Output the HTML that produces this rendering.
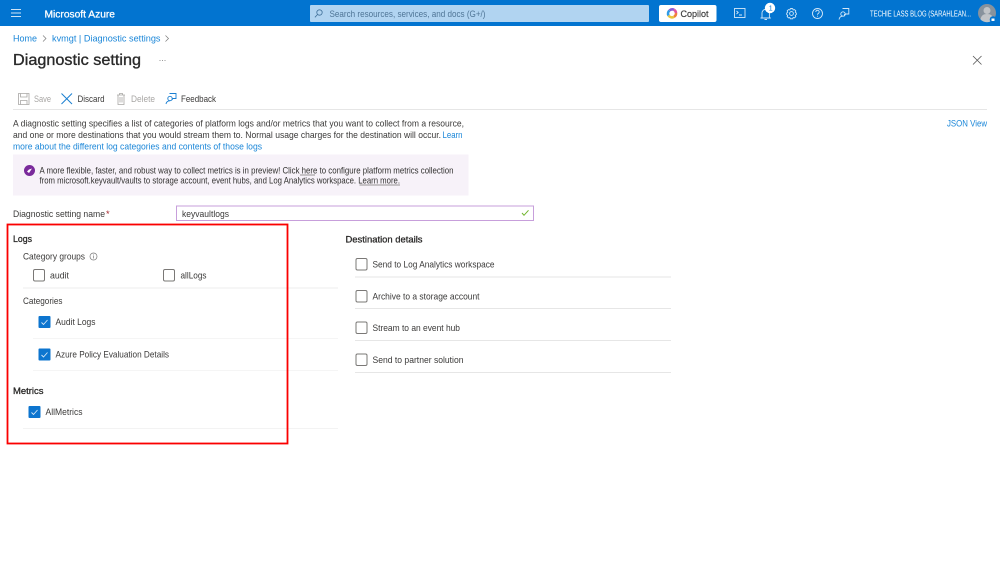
<!DOCTYPE html>
<html lang="en"><head><meta charset="utf-8"><title>Diagnostic setting</title>
<style>
html,body{margin:0;padding:0;background:#fff;width:1000px;height:563px;overflow:hidden}
svg{display:block;filter:blur(.35px)}
text{font-family:"Liberation Sans",sans-serif;font-size:9.3px;fill:#3b3a39}
.b{fill:#292827;stroke:#292827;stroke-width:.28}
.l{fill:#1a86d8}
.d{fill:#a8a6a4}
.n{fill:none}
</style></head><body>
<svg width="1000" height="563" viewBox="0 0 1000 563" xmlns="http://www.w3.org/2000/svg">
<rect width="1000" height="26" fill="#0274d0"/>
<g stroke="#cfe4f6" stroke-width="1"><path d="M11 9.500h10M11 13h10M11 16.500h10"/></g>
<text x="44.500" y="17.500" textLength="70.500" lengthAdjust="spacingAndGlyphs" style="font-size:10.200px;fill:#fff;stroke:#fff;stroke-width:.25">Microsoft Azure</text>
<rect x="310" y="5" width="339" height="17" rx="1" fill="#b1d4f1"/>
<circle cx="319.500" cy="12.500" r="2.700" class="n" stroke="#41719a" stroke-width=".8"/><path d="M317.500 14.500l-2.600 2.800" stroke="#41719a" stroke-width=".8"/>
<text x="329.500" y="17" textLength="156" lengthAdjust="spacingAndGlyphs" style="fill:#4f7596">Search resources, services, and docs (G+/)</text>
<rect x="659" y="5" width="57.500" height="17" rx="2" fill="#fff"/>
<g fill="none" stroke-width="2.600">
<path d="M668.500 15.500a4 4 0 0 1 1-5" stroke="#2f9be6"/>
<path d="M669.500 10.500a4 4 0 0 1 4.500-.8" stroke="#8a5ad6"/>
<path d="M674 9.700a4 4 0 0 1 2 3.300" stroke="#e2569c"/>
<path d="M676 13a4 4 0 0 1-2 3.800" stroke="#f0803c"/>
<path d="M674 16.800a4 4 0 0 1-5.500-1.300" stroke="#e8c53c"/>
</g>
<text x="680.500" y="17" textLength="28" lengthAdjust="spacingAndGlyphs" style="fill:#404040;stroke:#404040;stroke-width:.2">Copilot</text>
<g class="n" stroke="#d5e8f8" stroke-width=".9" fill="none">
<rect x="734.500" y="8.500" width="10.500" height="9"/><path d="M736.500 11l1.700 1.500-1.700 1.500M739 15h3"/>
<path d="M762 18v-5a3.700 3.700 0 0 1 7.400 0v5M760.500 18h10.300M764.500 19.500h2.500"/>
<circle cx="791.500" cy="13.500" r="1.900"/>
<path d="M791.500 8.500l1.200.2.500 1.300 1.300-.4 1.300 1.300-.5 1.300 1 .9v1.400l-1 .8.500 1.300-1.300 1.300-1.300-.4-.5 1.300h-2.400l-.5-1.300-1.300.4-1.300-1.300.5-1.300-1-.8v-1.400l1-.9-.5-1.300 1.300-1.300 1.300.4.500-1.300z"/>
<circle cx="817.500" cy="13.500" r="5"/><path d="M815.800 12a1.700 1.700 0 1 1 2.600 1.400c-.6.400-.9.700-.9 1.400M817.500 15.800v.8"/>
<circle cx="843" cy="14" r="2.200"/><path d="M839 19.500c.4-2.200 1.800-3.400 4-3.400M842.500 8.500h6.300v5.500h-3l-1.300 1.500v-1.500"/>
</g>
<circle cx="770" cy="8" r="5.200" fill="#fff"/><text x="768.700" y="10.500" style="font-size:7px;fill:#0274d0">1</text>
<text x="870" y="16.500" textLength="101" lengthAdjust="spacingAndGlyphs" style="font-size:7.800px;fill:#fff">TECHIE LASS BLOG (SARAHLEAN...</text>
<circle cx="987" cy="13" r="9" fill="#87929d"/><circle cx="987" cy="10.500" r="3.500" fill="#c0c4c8"/><path d="M980.500 19.500c.5-4 3-5.500 6.500-5.500s6 1.500 6.500 5.500a9 9 0 0 1-13 0z" fill="#c0c4c8"/>
<circle cx="993" cy="19.500" r="3.300" fill="#0274d0"/><rect x="991.500" y="18.500" width="3" height="2.500" fill="#fff"/>

<text x="13" y="41.500" textLength="24" lengthAdjust="spacingAndGlyphs" class="l">Home</text>
<path d="M43 35.500l3 3-3 3M165.500 35.500l3 3-3 3" class="n" stroke="#777" stroke-width=".7"/>
<text x="52" y="41.500" textLength="108.500" lengthAdjust="spacingAndGlyphs" class="l">kvmgt | Diagnostic settings</text>
<text x="13" y="65" textLength="128" lengthAdjust="spacingAndGlyphs" style="font-size:15.800px;fill:#2a2a2a;stroke:#2a2a2a;stroke-width:.35">Diagnostic setting</text>
<g fill="#777"><circle cx="160" cy="60.500" r=".5"/><circle cx="162.500" cy="60.500" r=".5"/><circle cx="165" cy="60.500" r=".5"/></g>
<path d="M973 56l8.500 8.500M981.500 56l-8.500 8.500" stroke="#555" stroke-width=".8"/>

<g class="n" fill="none" stroke="#a8a6a4" stroke-width=".8"><path d="M18.500 93.500h10.500v11h-10.500zM20.500 93.500v3.500h6.500v-3.500M20.500 104.500v-4h6.500v4"/>
<path d="M117 95h8M118 95v9.500h6V95M119.500 95v-1.500h3V95M120 97v5.500M122 97v5.500"/></g>
<path d="M61.500 93.500l10.500 10.500M72 93.500l-10.500 10.500" stroke="#1a7fd1" stroke-width="1"/>
<g fill="none" stroke="#1a7fd1" stroke-width=".9"><circle cx="170" cy="98.500" r="2.200"/><path d="M166 104c.4-2.200 1.800-3.200 4-3.200M169.500 93.500h6.500v5h-3l-1.300 1.500"/></g>
<text x="34" y="102" textLength="17" lengthAdjust="spacingAndGlyphs" class="d">Save</text>
<text x="77.500" y="102" textLength="27" lengthAdjust="spacingAndGlyphs">Discard</text>
<text x="131" y="102" textLength="24" lengthAdjust="spacingAndGlyphs" class="d">Delete</text>
<text x="181" y="102" textLength="35" lengthAdjust="spacingAndGlyphs">Feedback</text>
<rect x="13" y="109" width="974" height="1" fill="#e6e6e6"/>

<text x="13" y="126.500" textLength="451" lengthAdjust="spacingAndGlyphs">A diagnostic setting specifies a list of categories of platform logs and/or metrics that you want to collect from a resource,</text>
<text x="13" y="138" textLength="428" lengthAdjust="spacingAndGlyphs">and one or more destinations that you would stream them to. Normal usage charges for the destination will occur.</text>
<text x="442.500" y="138" textLength="20" lengthAdjust="spacingAndGlyphs" class="l">Learn</text>
<text x="13" y="149.500" textLength="249" lengthAdjust="spacingAndGlyphs" class="l">more about the different log categories and contents of those logs</text>
<text x="947" y="126.500" textLength="40" lengthAdjust="spacingAndGlyphs" class="l">JSON View</text>

<rect x="13" y="154.500" width="455.500" height="41" fill="#f7f2f9"/>
<circle cx="29.500" cy="170.500" r="5.500" fill="#7a2a9b"/><path d="M27 171.500l2 1.500 3-4.500-3 1z" fill="#fff"/>
<text x="39.500" y="173.500" textLength="414" lengthAdjust="spacingAndGlyphs" style="fill:#323130">A more flexible, faster, and robust way to collect metrics is in preview! Click here to configure platform metrics collection</text>
<text x="39.500" y="183.500" textLength="360.500" lengthAdjust="spacingAndGlyphs" style="fill:#323130">from microsoft.keyvault/vaults to storage account, event hubs, and Log Analytics workspace. Learn more.</text>
<path d="M300 175h15M359.500 185h40.500" stroke="#323130" stroke-width=".6"/>

<text x="13" y="217" textLength="92" lengthAdjust="spacingAndGlyphs">Diagnostic setting name</text>
<text x="106" y="217" style="fill:#a4262c">*</text>
<rect x="176.500" y="206" width="357" height="14.500" fill="#fff" stroke="#c79fdb" stroke-width="1"/>
<text x="182" y="217" textLength="47" lengthAdjust="spacingAndGlyphs">keyvaultlogs</text>
<path d="M522 213l2 2.300 4.500-5" class="n" stroke="#6fb52c" stroke-width="1"/>

<text x="13" y="242" textLength="19" lengthAdjust="spacingAndGlyphs" class="b">Logs</text>
<text x="23" y="259.500" textLength="62" lengthAdjust="spacingAndGlyphs">Category groups</text>
<circle cx="93.500" cy="256.500" r="3.500" class="n" stroke="#777" stroke-width=".7"/><path d="M93.500 255.500v3M93.500 254.200v.6" stroke="#777" stroke-width=".7"/>
<g fill="#fff" stroke="#7a7876" stroke-width="1">
<rect x="33.500" y="269.500" width="11" height="11.500" rx="1.500"/>
<rect x="163.500" y="269.500" width="11" height="11.500" rx="1.500"/>
<rect x="356" y="258.500" width="11" height="11.500" rx="1.500"/>
<rect x="356" y="290.500" width="11" height="11.500" rx="1.500"/>
<rect x="356" y="322" width="11" height="11.500" rx="1.500"/>
<rect x="356" y="354" width="11" height="11.500" rx="1.500"/>
</g>
<text x="50" y="278.500" textLength="19" lengthAdjust="spacingAndGlyphs">audit</text>
<text x="180.500" y="278.500" textLength="26" lengthAdjust="spacingAndGlyphs">allLogs</text>
<rect x="23" y="287.500" width="315" height="1" fill="#ececec"/>
<text x="23" y="304" textLength="39.500" lengthAdjust="spacingAndGlyphs">Categories</text>
<g fill="#0d75cf">
<rect x="38.500" y="316" width="12" height="12" rx="1"/>
<rect x="38.500" y="348.500" width="12" height="12" rx="1"/>
<rect x="28.500" y="406" width="12" height="12" rx="1"/>
</g>
<g fill="none" stroke="#d5e8f8" stroke-width=".9">
<path d="M41.500 322.500l2 2 4-4.500M41.500 355l2 2 4-4.500M31.500 412.500l2 2 4-4.500"/>
</g>
<text x="55.500" y="325" textLength="40" lengthAdjust="spacingAndGlyphs">Audit Logs</text>
<rect x="33" y="338" width="305" height="1" fill="#f5f5f5"/>
<text x="55.500" y="357.500" textLength="113.500" lengthAdjust="spacingAndGlyphs">Azure Policy Evaluation Details</text>
<rect x="33" y="370" width="305" height="1" fill="#f5f5f5"/>
<text x="13" y="394" textLength="30.500" lengthAdjust="spacingAndGlyphs" class="b">Metrics</text>
<text x="45.500" y="415" textLength="37" lengthAdjust="spacingAndGlyphs">AllMetrics</text>
<rect x="23" y="428" width="315" height="1" fill="#f3f3f3"/>

<text x="345.500" y="242.500" textLength="77" lengthAdjust="spacingAndGlyphs" class="b">Destination details</text>
<text x="372.500" y="267.500" textLength="122" lengthAdjust="spacingAndGlyphs">Send to Log Analytics workspace</text>
<rect x="355" y="276.500" width="316" height="1" fill="#e6e6e6"/>
<text x="372.500" y="299.500" textLength="107" lengthAdjust="spacingAndGlyphs">Archive to a storage account</text>
<rect x="355" y="308" width="316" height="1" fill="#e6e6e6"/>
<text x="372.500" y="331" textLength="87.500" lengthAdjust="spacingAndGlyphs">Stream to an event hub</text>
<rect x="355" y="340" width="316" height="1" fill="#e6e6e6"/>
<text x="372.500" y="363" textLength="91" lengthAdjust="spacingAndGlyphs">Send to partner solution</text>
<rect x="355" y="372" width="316" height="1" fill="#e6e6e6"/>

<rect x="7.500" y="224.500" width="280" height="219" class="n" stroke="#fb0000" stroke-width="1.800"/>
</svg>
</body></html>
